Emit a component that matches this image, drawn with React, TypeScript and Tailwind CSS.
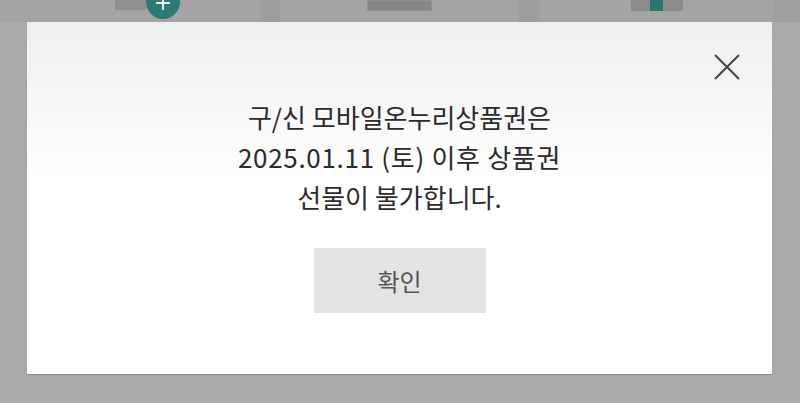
export default function App() {
  return (
    <div
      className="w-[800px] h-[403px] bg-[#a9aaa9] overflow-hidden flex flex-col"
      style={{ fontFamily: '"Noto Sans CJK KR", "Noto Sans", sans-serif' }}
    >
      {/* dimmed page behind the dialog */}
      <div className="h-[22px] bg-[#a4a4a4] flex shrink-0">
        <div className="w-[115px]" />
        <div className="w-[31px] h-[10px] bg-[#8f9191]" />
        <div className="relative w-[34px]">
          <div className="absolute -top-[15px] left-0 w-[34px] h-[34px] rounded-full bg-[#2c7a78] flex items-end justify-center pb-[9px]">
            <svg width="14" height="14" viewBox="0 0 14 14" stroke="#e8f0ef" strokeWidth="2">
              <path d="M7 0 V14 M0 7 H14" />
            </svg>
          </div>
        </div>
        <div className="w-[80px]" />
        <div className="w-[20px] bg-[#9d9d9d]" />
        <div className="w-[87px]" />
        <div className="w-[65px] h-[11px] bg-[#858787] border border-[#8f9090]" />
        <div className="w-[86px]" />
        <div className="w-[22px] bg-[#9d9d9d]" />
        <div className="w-[91px]" />
        <div className="w-[52px] h-[11px] bg-[#8a8c8c] flex">
          <div className="w-[19px]" />
          <div className="w-[13px] bg-[#2a7573]" />
        </div>
        <div className="w-[90px]" />
        <div className="flex-1 bg-[#9f9f9f]" />
      </div>

      {/* dialog */}
      <div className="relative ml-[27px] w-[745px] h-[352px] bg-gradient-to-b from-[#efefef] to-white to-[45%] flex flex-col items-center pt-[75px] shadow-[0_1px_1px_rgba(0,0,0,0.15)]">
        <button className="absolute top-[30px] right-[30px] w-[30px] h-[30px] flex items-center justify-center">
          <svg width="28" height="28" viewBox="0 0 28 28" fill="none" stroke="#444" strokeWidth="2">
            <path d="M2 2 L26 26 M26 2 L2 26" />
          </svg>
        </button>
        <div className="text-center text-[26px] leading-[40px] text-[#2b2b2b]">
          <p>구/신 모바일온누리상품권은</p>
          <p className="tracking-[0.7px]">2025.01.11 (토) 이후 상품권</p>
          <p>선물이 불가합니다.</p>
        </div>
        <button className="mt-[31px] w-[172px] h-[65px] bg-[#e4e4e4] text-[24px] text-[#555] flex items-center justify-center">
          확인
        </button>
      </div>
    </div>
  )
}
